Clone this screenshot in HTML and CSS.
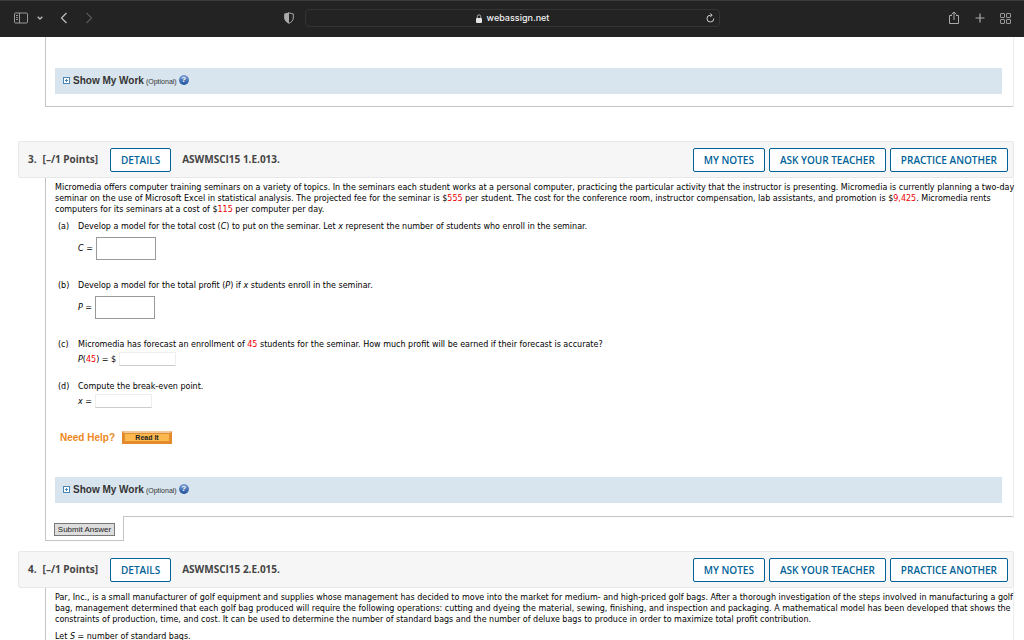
FILE: index.html
```html
<!DOCTYPE html>
<html lang="en">
<head>
    <meta charset="UTF-8">
    <meta name="viewport" content="width=device-width, initial-scale=1.0">
    <title>WebAssign</title>
    <link rel="stylesheet" href="styles.css">
</head>
<body>
<header class="toolbar">
    <div class="tools tools-left">
        <button class="tool" aria-label="Sidebar">
            <svg width="14" height="12" viewBox="0 0 14 12" fill="none" stroke="#999"><rect x=".5" y="1" width="13" height="10" rx="1"/><path d="M5.5 1v10M2 3.5h2M2 5.5h2M2 7.5h2"/></svg>
        </button>
        <button class="tool tool-menu" aria-label="Tab groups">
            <svg width="6" height="4" viewBox="0 0 6 4" fill="none" stroke="#bbb" stroke-width="1.3"><path d="M.7.7 3 3 5.3.7"/></svg>
        </button>
        <button class="tool tool-back" aria-label="Back">
            <svg width="8" height="12" viewBox="0 0 8 12" fill="none" stroke="#bbb" stroke-width="1.3"><path d="M6.5 1 1.5 6l5 5"/></svg>
        </button>
        <button class="tool tool-forward" aria-label="Forward">
            <svg width="8" height="12" viewBox="0 0 8 12" fill="none" stroke="#555" stroke-width="1.3"><path d="m1.5 1 5 5-5 5"/></svg>
        </button>
    </div>
    <div class="address">
        <button class="tool" aria-label="Privacy report">
            <svg width="10" height="12" viewBox="0 0 10 12"><path d="M5 .7C3.7 1.4 2 1.8.7 1.9V6c0 2.5 2 4.3 4.3 5.3C7.3 10.3 9.3 8.5 9.3 6V1.9C8 1.8 6.3 1.4 5 .7z" fill="none" stroke="#aaa"/><path d="M5 .7C3.7 1.4 2 1.8.7 1.9V6c0 2.5 2 4.3 4.3 5.3z" fill="#aaa"/></svg>
        </button>
        <div class="url">
            <span class="url-text">
                <svg width="6" height="9" viewBox="0 0 6 9"><rect y="4" width="6" height="5" rx="1" fill="#e4e4e4"/><path d="M1.3 4V2.5a1.7 1.7 0 0 1 3.4 0V4" fill="none" stroke="#aaa"/></svg>
                webassign.net
            </span>
            <button class="tool" aria-label="Reload">
                <svg width="9" height="10" viewBox="0 0 9 10" fill="none" stroke="#ccc"><path d="M7.8 5.5A3.4 3.4 0 1 1 4.5 2.2H6M4.3.4 6.1 2.2 4.3 4"/></svg>
            </button>
        </div>
    </div>
    <div class="tools tools-right">
        <button class="tool" aria-label="Share">
            <svg width="12" height="14" viewBox="0 0 12 14" fill="none" stroke="#aaa"><path d="M4 4.5H1.5v8h9v-8H8M6 9V1.2M3.5 3.5 6 1l2.5 2.5"/></svg>
        </button>
        <button class="tool" aria-label="New tab">
            <svg width="10" height="10" viewBox="0 0 10 10" stroke="#aaa" stroke-width="1.2"><path d="M5 .5v9M.5 5h9"/></svg>
        </button>
        <button class="tool" aria-label="Tab overview">
            <svg width="11" height="11" viewBox="0 0 11 11" fill="none" stroke="#999"><rect x=".5" y=".5" width="4" height="4" rx=".5"/><rect x="6.5" y=".5" width="4" height="4" rx=".5"/><rect x=".5" y="6.5" width="4" height="4" rx=".5"/><rect x="6.5" y="6.5" width="4" height="4" rx=".5"/></svg>
        </button>
    </div>
</header>

<main class="page">
    <section class="question">
        <div class="panel panel-closed">
            <div class="work">
                <button class="expand" aria-label="Expand"><svg width="7" height="7" viewBox="0 0 7 7" fill="#fff" stroke="#4a86b5"><rect x=".5" y=".5" width="6" height="6"/><path d="M2 3.5h3M3.5 2v3"/></svg></button>
                <strong>Show My Work</strong>
                <small>(Optional)</small>
                <button class="help" aria-label="Help">?</button>
            </div>
        </div>
    </section>

    <section class="question">
        <div class="question-head">
            <span class="points"><span>3.</span><span>[–/1 Points]</span></span>
            <button class="btn">DETAILS</button>
            <span class="code">ASWMSCI15 1.E.013.</span>
            <div class="actions">
                <button class="btn">MY NOTES</button>
                <button class="btn">ASK YOUR TEACHER</button>
                <button class="btn">PRACTICE ANOTHER</button>
            </div>
        </div>
        <div class="panel">
            <p class="text">Micromedia offers computer training seminars on a variety of topics. In the seminars each student works at a personal computer, practicing the particular activity that the instructor is presenting. Micromedia is currently planning a two-day<br>
                seminar on the use of Microsoft Excel in statistical analysis. The projected fee for the seminar is $<b>555</b> per student. The cost for the conference room, instructor compensation, lab assistants, and promotion is $<b>9,425</b>. Micromedia rents<br>
                computers for its seminars at a cost of $<b>115</b> per computer per day.</p>
            <div class="parts">
                <div class="part">
                    <span>(a)</span>
                    <div>
                        <div>Develop a model for the total cost (<i>C</i>) to put on the seminar. Let <i>x</i> represent the number of students who enroll in the seminar.</div>
                        <div class="answer answer-math"><label for="cost"><i>C</i> =</label><input id="cost" type="text"></div>
                    </div>
                </div>
                <div class="part">
                    <span>(b)</span>
                    <div>
                        <div>Develop a model for the total profit (<i>P</i>) if <i>x</i> students enroll in the seminar.</div>
                        <div class="answer answer-math"><label for="profit"><i>P</i> =</label><input id="profit" type="text"></div>
                    </div>
                </div>
                <div class="part">
                    <span>(c)</span>
                    <div>
                        <div>Micromedia has forecast an enrollment of <b>45</b> students for the seminar. How much profit will be earned if their forecast is accurate?</div>
                        <div class="answer"><label for="forecast"><i>P</i>(<b>45</b>) = $</label><input id="forecast" type="text"></div>
                    </div>
                </div>
                <div class="part">
                    <span>(d)</span>
                    <div>
                        <div>Compute the break-even point.</div>
                        <div class="answer"><label for="break-even"><i>x</i> =</label><input id="break-even" type="text"></div>
                    </div>
                </div>
            </div>
            <div class="need-help">
                <span>Need Help?</span>
                <button class="read-it">Read It</button>
            </div>
            <div class="work">
                <button class="expand" aria-label="Expand"><svg width="7" height="7" viewBox="0 0 7 7" fill="#fff" stroke="#4a86b5"><rect x=".5" y=".5" width="6" height="6"/><path d="M2 3.5h3M3.5 2v3"/></svg></button>
                <strong>Show My Work</strong>
                <small>(Optional)</small>
                <button class="help" aria-label="Help">?</button>
            </div>
        </div>
        <div class="panel-foot">
            <div class="submit-tab"><button class="submit">Submit Answer</button></div>
            <div class="panel-edge"></div>
        </div>
    </section>

    <section class="question">
        <div class="question-head">
            <span class="points"><span>4.</span><span>[–/1 Points]</span></span>
            <button class="btn">DETAILS</button>
            <span class="code">ASWMSCI15 2.E.015.</span>
            <div class="actions">
                <button class="btn">MY NOTES</button>
                <button class="btn">ASK YOUR TEACHER</button>
                <button class="btn">PRACTICE ANOTHER</button>
            </div>
        </div>
        <div class="panel">
            <p class="text">Par, Inc., is a small manufacturer of golf equipment and supplies whose management has decided to move into the market for medium- and high-priced golf bags. After a thorough investigation of the steps involved in manufacturing a golf<br>
                bag, management determined that each golf bag produced will require the following operations: cutting and dyeing the material, sewing, finishing, and inspection and packaging. A mathematical model has been developed that shows the<br>
                constraints of production, time, and cost. It can be used to determine the number of standard bags and the number of deluxe bags to produce in order to maximize total profit contribution.</p>
            <p class="text">Let <i>S</i> = number of standard bags.</p>
        </div>
    </section>
</main>
</body>
</html>
```
FILE: styles.css
```css
* {
    box-sizing: border-box;
}

body {
    margin: 0;
    height: 100vh;
    display: flex;
    flex-direction: column;
    overflow: hidden;
    background: #fff;
    color: #000;
    font-family: Verdana, "DejaVu Sans", sans-serif;
    font-size: 8px;
    line-height: 11px;
}

button {
    padding: 0;
    border: none;
    background: none;
    cursor: pointer;
}

svg {
    display: block;
}

/* browser toolbar */
.toolbar {
    flex: none;
    height: 37px;
    padding: 0 13px 2px 14px;
    display: flex;
    align-items: center;
    background: #232323;
    border-top: 1px solid #3c3c3c;
}

.tools {
    flex: 1;
    display: flex;
    align-items: center;
}

.tools-right {
    justify-content: flex-end;
    gap: 15px;
}

.tool-menu {
    margin-left: 9px;
}

.tool-back {
    margin-left: 17px;
}

.tool-forward {
    margin-left: 17px;
}

.address {
    flex: 0 1 436px;
    margin-right: 22px;
    display: flex;
    align-items: center;
    gap: 11px;
}

.url {
    flex: 1;
    height: 18px;
    padding: 0 4px;
    display: flex;
    align-items: center;
    border: 1px solid #343434;
    border-radius: 4px;
}

.url-text {
    flex: 1;
    display: flex;
    align-items: center;
    justify-content: center;
    gap: 5px;
    padding-left: 10px;
    color: #f0f0f0;
    font-family: Inter, sans-serif;
    font-size: 9px;
    font-weight: 500;
    line-height: 10px;
}

/* questions */
.page {
    flex: 1;
    min-height: 0;
    padding: 0 10px 0 18px;
    overflow: hidden;
}

.question-head {
    height: 37px;
    padding: 0 5px 0 9px;
    display: flex;
    align-items: center;
    background: #f6f6f6;
    border: 1px solid #e8e8e8;
    border-radius: 2px;
    color: #444;
    font-family: "Open Sans", sans-serif;
    font-size: 10px;
    font-weight: 700;
}

.points {
    width: 82px;
    display: flex;
    gap: 6px;
    white-space: nowrap;
}

.btn {
    height: 24px;
    padding: 0 10px;
    border: 1px solid #006298;
    border-radius: 2px;
    background: #fff;
    color: #006298;
    font-family: "Open Sans", sans-serif;
    font-size: 10px;
    font-weight: 600;
    line-height: 20px;
    white-space: nowrap;
}

.code {
    margin-left: 11px;
}

.actions {
    margin-left: auto;
    display: flex;
    gap: 4px;
}

.panel {
    margin-left: 27px;
    padding: 4px 11px 13px 9px;
    border-left: 1px solid #c4c4c4;
    border-right: 1px solid #ececec;
}

.panel-closed {
    margin-bottom: 34px;
    padding-top: 31px;
    padding-bottom: 12px;
    border-bottom: 1px solid #c4c4c4;
    border-radius: 0 0 2px 0;
}

.text {
    margin: 0 0 6px;
    white-space: nowrap;
}

b {
    color: #e00;
    font-weight: 400;
}

.parts {
    padding-left: 3px;
}

.part {
    display: grid;
    grid-template-columns: 20px 1fr;
}

.answer {
    margin-top: 2px;
    margin-bottom: 15px;
    display: flex;
    align-items: center;
    gap: 3px;
}

.answer input {
    width: 57px;
    height: 14px;
    padding: 0 2px;
    border: 1px solid #eee;
    border-bottom-color: #ccc;
    font: inherit;
}

.answer-math {
    margin-top: 5px;
    margin-bottom: 20px;
}

.answer-math input {
    width: 60px;
    height: 23px;
    border: 1px solid #999;
}

.need-help {
    margin: 8px 0 33px;
    padding-left: 5px;
    display: flex;
    align-items: center;
    gap: 7px;
    color: #ee8822;
    font-family: "Liberation Sans", Arial, sans-serif;
    font-size: 10px;
    font-weight: 700;
}

.read-it {
    width: 50px;
    height: 13px;
    border: 2px solid #e58a2c;
    border-top-color: #f3c79c;
    background: #fdb94d;
    box-shadow: inset 0 0 0 1px #e0902c;
    color: #222;
    font-family: "Liberation Sans", Arial, sans-serif;
    font-size: 7px;
    font-weight: 700;
    line-height: 9px;
}

.work {
    height: 26px;
    padding: 0 8px 2px;
    display: flex;
    align-items: center;
    gap: 2px;
    background: #d9e5ee;
    color: #333;
    font-family: "Liberation Sans", Arial, sans-serif;
}

.expand {
    margin-right: 1px;
}

.work strong {
    font-size: 10px;
}

.work small {
    padding-top: 3px;
    font-size: 7px;
}

.help {
    width: 10px;
    height: 10px;
    border-radius: 50%;
    background: linear-gradient(#7fa3d4, #1d4f9c);
    color: #fff;
    font-family: "Liberation Sans", Arial, sans-serif;
    font-size: 8px;
    font-weight: 700;
    line-height: 10px;
}

.panel-foot {
    margin-left: 27px;
    margin-bottom: 10px;
    display: flex;
}

.submit-tab {
    height: 25px;
    padding: 7px 8px 0;
    border: 1px solid #c4c4c4;
    border-top: none;
}

.panel-edge {
    flex: 1;
    border-top: 1px solid #c4c4c4;
    border-top-right-radius: 2px;
}

.submit {
    width: 61px;
    height: 13px;
    border: 1px solid #777;
    background: #ddd;
    color: #222;
    font-family: "Liberation Sans", Arial, sans-serif;
    font-size: 8px;
    line-height: 11px;
    white-space: nowrap;
}
```
